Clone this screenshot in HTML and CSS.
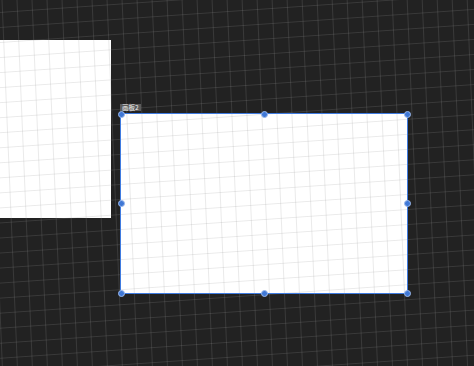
FILE: index.html
```html
<!DOCTYPE html>
<html>
<head>
<meta charset="utf-8">
<link rel="stylesheet" href="styles.css">
</head>
<body>
<div class="canvas">
  <div class="board board-left"></div>
  <div class="board board-right"></div>
  <div class="grid"></div>
  <div class="selection">
    <span class="label">画板2</span>
    <span class="handle h-tl"></span>
    <span class="handle h-tc"></span>
    <span class="handle h-tr"></span>
    <span class="handle h-ml"></span>
    <span class="handle h-mr"></span>
    <span class="handle h-bl"></span>
    <span class="handle h-bc"></span>
    <span class="handle h-br"></span>
  </div>
</div>
</body>
</html>
```
FILE: styles.css
```css
html, body {
  margin: 0;
  padding: 0;
  width: 474px;
  height: 366px;
  overflow: hidden;
  background: #222222;
  font-family: "Noto Sans CJK SC", "Noto Sans", sans-serif;
}
.canvas {
  position: relative;
  width: 474px;
  height: 366px;
  overflow: hidden;
}
.board {
  position: absolute;
  background: #ffffff;
}
.board-left {
  left: 0;
  top: 40px;
  width: 111px;
  height: 178px;
}
.board-right {
  left: 121px;
  top: 114px;
  width: 286px;
  height: 179px;
}
.grid {
  position: absolute;
  left: -200px;
  top: -200px;
  width: 900px;
  height: 800px;
  transform: rotate(-4deg) skewX(-1.6deg);
  background-image:
    linear-gradient(to bottom, rgba(150,150,150,0.2) 1px, transparent 1px),
    linear-gradient(to right, rgba(150,150,150,0.2) 1px, transparent 1px);
  background-size: 15px 15px;
  pointer-events: none;
}
.selection {
  position: absolute;
  box-sizing: border-box;
  left: 120px;
  top: 113px;
  width: 288px;
  height: 181px;
  border: 1px solid #3f7be0;
}
.label {
  position: absolute;
  left: -1px;
  top: -10px;
  padding: 0 2px;
  font-size: 6.5px;
  line-height: 7px;
  background: #5c5c5c;
  color: #f0f0f0;
  white-space: nowrap;
}
.handle {
  position: absolute;
  width: 5px;
  height: 5px;
  border-radius: 50%;
  background: #3f78d6;
  border: 1px solid #9db9ea;
  margin: -3.5px 0 0 -3.5px;
}
.h-tl { left: 0; top: 0; }
.h-tc { left: 50%; top: 0; }
.h-tr { left: 100%; top: 0; }
.h-ml { left: 0; top: 50%; }
.h-mr { left: 100%; top: 50%; }
.h-bl { left: 0; top: 100%; }
.h-bc { left: 50%; top: 100%; }
.h-br { left: 100%; top: 100%; }
```
